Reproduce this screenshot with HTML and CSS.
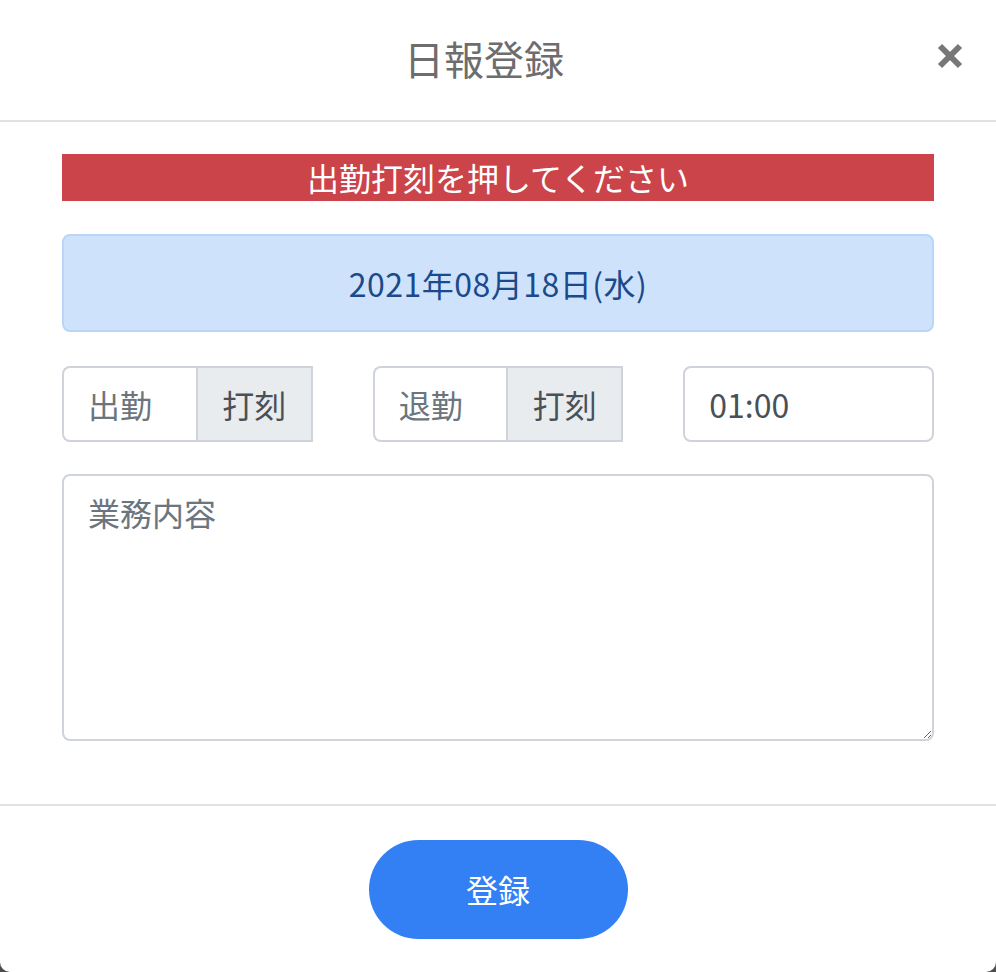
FILE: index.html
```html
<!DOCTYPE html>
<html lang="ja">
<head>
<meta charset="utf-8">
<title>日報登録</title>
<link rel="stylesheet" href="styles.css">
</head>
<body>
<div class="modal">
  <div class="modal-header">
    <h5 class="modal-title">日報登録</h5>
    <button class="close" type="button" aria-label="Close">
      <svg width="28" height="26" viewBox="0 0 28 26"><path d="M4 3 L24 23 M24 3 L4 23" stroke="#777" stroke-width="6" stroke-linecap="butt" fill="none"/></svg>
    </button>
  </div>
  <div class="modal-body">
    <div class="alert-danger">出勤打刻を押してください</div>
    <div class="alert-date">2021年08月18日(水)</div>
    <div class="row">
      <div class="input-group">
        <input class="form-control left" type="text" placeholder="出勤">
        <button class="append" type="button">打刻</button>
      </div>
      <div class="input-group">
        <input class="form-control left" type="text" placeholder="退勤">
        <button class="append" type="button">打刻</button>
      </div>
      <input class="form-control time" type="text" value="01:00">
    </div>
    <textarea class="form-control memo" placeholder="業務内容"></textarea>
  </div>
  <div class="modal-footer">
    <button class="btn-primary" type="button">登録</button>
  </div>
</div>
</body>
</html>
```
FILE: styles.css
```css
html, body {
  margin: 0;
  padding: 0;
}
body {
  background: #4d4d4d;
  font-family: "Noto Sans CJK JP", "Noto Sans", sans-serif;
  font-size: 32px;
  color: #495057;
}
.modal {
  background: #fff;
  height: 972px;
  border-radius: 0 0 10px 10px;
  display: flex;
  flex-direction: column;
  box-sizing: border-box;
}
.modal-header {
  height: 120px;
  border-bottom: 2px solid #dee2e6;
  display: flex;
  align-items: center;
  padding: 0 32px;
}
.modal-title {
  flex: 1;
  margin: 0;
  text-align: center;
  font-size: 40px;
  font-weight: 400;
  color: #6d6d6d;
  line-height: 60px;
  margin-top: -4px;
}
.close {
  width: 28px;
  height: 28px;
  padding: 0;
  border: 0;
  background: transparent;
  display: flex;
  align-items: center;
  justify-content: center;
  margin-top: -8px;
}
.modal-body {
  padding: 32px 62px 63px;
  display: flex;
  flex-direction: column;
}
.alert-danger {
  background: #cb444a;
  color: #fff;
  height: 47px;
  line-height: 47px;
  text-align: center;
  font-size: 32px;
  margin-bottom: 33px;
}
.alert-date {
  background: #cfe2fb;
  border: 2px solid #b9d5f7;
  border-radius: 8px;
  color: #1b4a8c;
  text-align: center;
  height: 98px;
  box-sizing: border-box;
  line-height: 94px;
  font-size: 32px;
  letter-spacing: 0.5px;
  margin-bottom: 34px;
}
.row {
  display: grid;
  grid-template-columns: repeat(3, minmax(0, 1fr));
  column-gap: 60px;
  height: 76px;
  margin-bottom: 32px;
}
.input-group {
  display: flex;
  height: 76px;
  min-width: 0;
}
.form-control {
  font-family: "Noto Sans CJK JP", "Noto Sans", sans-serif;
  font-size: 32px;
  color: #495057;
  border: 2px solid #ced4da;
  border-radius: 8px;
  padding: 12px 24px;
  box-sizing: border-box;
  background: #fff;
  outline: none;
}
.form-control::placeholder {
  color: #6c757d;
  opacity: 1;
}
.left {
  flex: 1 1 0;
  width: 0;
  min-width: 0;
  height: 76px;
  border-radius: 8px 0 0 8px;
  border-right: 0;
}
.append {
  flex: 0 0 auto;
  font-family: "Noto Sans CJK JP", "Noto Sans", sans-serif;
  font-size: 32px;
  color: #495057;
  background: #e9ecef;
  border: 2px solid #ced4da;
  border-radius: 0;
  padding: 0 24px;
  height: 76px;
  width: 117px;
}
.time {
  height: 76px;
  width: 100%;
  min-width: 0;
}
.memo {
  height: 267px;
  width: 100%;
  resize: vertical;
  line-height: 48px;
  display: block;
}
.modal-footer {
  border-top: 2px solid #dee2e6;
  flex: 1;
  display: flex;
  justify-content: center;
  align-items: center;
}
.btn-primary {
  width: 259px;
  height: 99px;
  border: 0;
  border-radius: 50px;
  background: #3380f5;
  color: #fff;
  font-family: "Noto Sans CJK JP", "Noto Sans", sans-serif;
  font-size: 32px;
}
```
